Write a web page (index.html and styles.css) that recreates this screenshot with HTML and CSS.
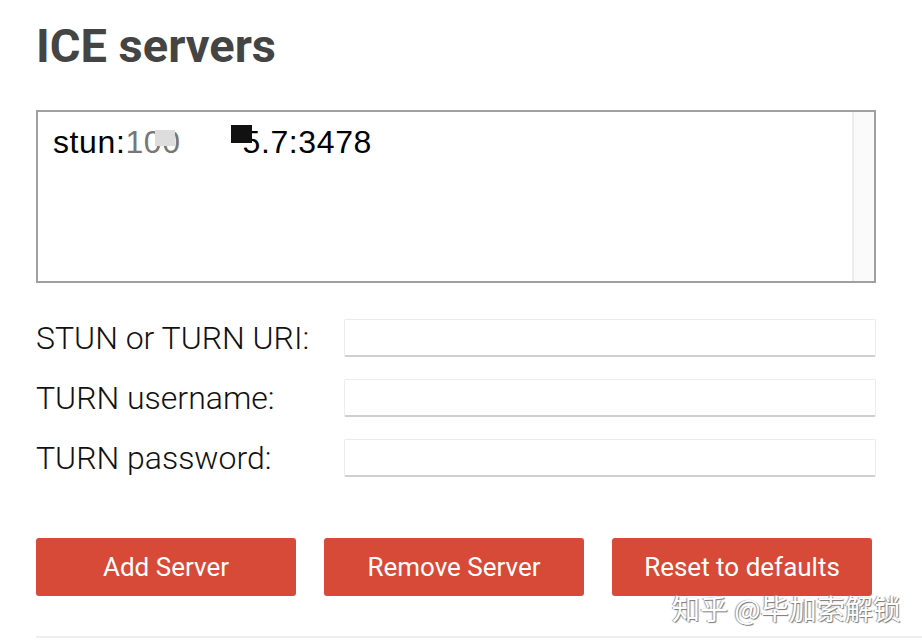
FILE: index.html
```html
<!DOCTYPE html>
<html lang="en">

<head>
    <meta charset="UTF-8">
    <meta name="viewport" content="width=device-width, initial-scale=1.0">
    <title>ICE servers</title>
    <link rel="stylesheet" href="styles.css">
</head>

<body>

    <div id="container">
        <h2>ICE servers</h2>

        <div id="servers" class="server-list">
            <div class="server-lines">
                <div class="server-line">stun:<span class="faint">100</span><span class="mask-grey"></span><span class="gap"></span>5<span class="mask-black"></span>.7:3478</div>
            </div>
            <div class="scrollbar"></div>
        </div>

        <div class="fields">
            <label for="url">STUN or TURN URI:</label>
            <input type="text" id="url">
            <label for="username">TURN username:</label>
            <input type="text" id="username">
            <label for="password">TURN password:</label>
            <input type="text" id="password">
        </div>

        <div class="buttons">
            <button id="add">Add Server</button>
            <button id="remove">Remove Server</button>
            <button id="reset">Reset to defaults</button>
        </div>

        <hr>
    </div>

    <div class="watermark">知乎 @毕加索解锁</div>

</body>

</html>
```

FILE: styles.css
```css
body {
    margin: 0;
    font-family: Roboto, 'Liberation Sans', Arial, sans-serif;
    background-color: #fff;
    position: relative;
}

#container {
    width: 840px;
    padding: 0 0 0 36px;
}

h2 {
    margin: 0;
    padding-top: 18px;
    height: 110px;
    box-sizing: border-box;
    font-size: 47px;
    font-weight: 700;
    color: #444;
    line-height: 56px;
}

.server-list {
    display: flex;
    height: 173px;
    box-sizing: border-box;
    border: 2px solid #a0a0a0;
    background-color: #fff;
}

.server-lines {
    flex: 1;
    padding: 8px 0 0 15px;
    overflow: hidden;
}

.scrollbar {
    width: 20px;
    background-color: #fafafa;
    border-left: 2px solid #ececec;
}

.server-line {
    font-family: 'Liberation Sans', Arial, sans-serif;
    font-size: 32px;
    letter-spacing: 0.6px;
    line-height: 44px;
    color: #000;
    white-space: nowrap;
}

.faint {
    color: #777;
}

.mask-grey {
    display: inline-block;
    width: 20px;
    height: 16px;
    background-color: #ddd;
    margin-left: -26px;
    margin-right: 6px;
    vertical-align: 7px;
}

.gap {
    display: inline-block;
    width: 62px;
}

.mask-black {
    display: inline-block;
    position: relative;
    width: 21px;
    height: 18px;
    background-color: #111;
    margin-left: -30px;
    margin-right: 9px;
    vertical-align: 10px;
}

.fields {
    display: grid;
    grid-template-columns: 308px 532px;
    row-gap: 22px;
    margin-top: 36px;
}

.fields label {
    font-size: 32px;
    font-weight: 300;
    color: #111;
    line-height: 38px;
}

.fields input {
    height: 38px;
    box-sizing: border-box;
    border: 1px solid #ececec;
    border-bottom: 2px solid #cfcfcf;
    border-radius: 2px;
    margin: 0;
    padding: 0 8px;
    font-size: 20px;
}

.buttons {
    display: flex;
    gap: 28px;
    margin-top: 61px;
}

button {
    width: 260px;
    height: 58px;
    font-family: Roboto, 'Liberation Sans', Arial, sans-serif;
    font-size: 26px;
    color: #fff;
    background-color: #d84a38;
    border: none;
    border-radius: 3px;
    cursor: pointer;
}

hr {
    margin: 40px 0 0 0;
    width: 886px;
    border: none;
    border-top: 2px solid #eee;
}

.watermark {
    position: absolute;
    left: 672px;
    top: 588px;
    font-family: 'Noto Sans CJK SC', sans-serif;
    font-size: 28px;
    color: #fff;
    text-shadow: 1px 1px 1px #777, -1px 0 1px #999;
    white-space: nowrap;
}
```
